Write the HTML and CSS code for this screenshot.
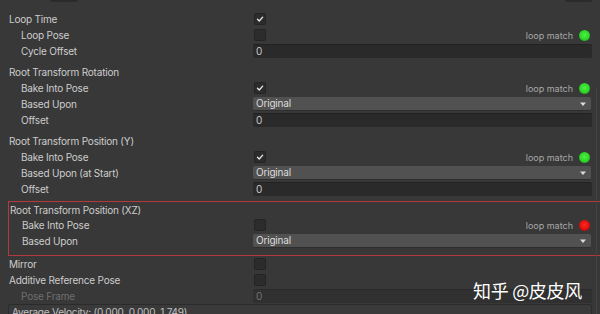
FILE: index.html
```html
<!DOCTYPE html>
<html>
<head>
<meta charset="utf-8">
<link rel="stylesheet" href="styles.css">
</head>
<body>
<div class="top"><span class="nub nub-l"></span><span class="nub nub-r"></span></div>
<div class="panel">
  <div class="row"><span class="label">Loop Time</span><span class="field"><span class="cb on"><svg viewBox="0 0 12 12"><path d="M3 6.3 L5.1 8.4 L9.2 3.8" fill="none" stroke="#e8e8e8" stroke-width="1.6" stroke-linecap="round" stroke-linejoin="round"/></svg></span></span></div>
  <div class="row"><span class="label ind">Loop Pose</span><span class="field"><span class="cb"></span><span class="match">loop match</span><span class="dot green"></span></span></div>
  <div class="row"><span class="label ind">Cycle Offset</span><span class="field"><span class="input">0</span></span></div>

  <div class="section">
    <div class="row"><span class="label">Root Transform Rotation</span><span class="field"></span></div>
    <div class="row"><span class="label ind">Bake Into Pose</span><span class="field"><span class="cb on"><svg viewBox="0 0 12 12"><path d="M3 6.3 L5.1 8.4 L9.2 3.8" fill="none" stroke="#e8e8e8" stroke-width="1.6" stroke-linecap="round" stroke-linejoin="round"/></svg></span><span class="match">loop match</span><span class="dot green"></span></span></div>
    <div class="row"><span class="label ind">Based Upon</span><span class="field"><span class="drop">Original<svg class="arrow" viewBox="0 0 8 6"><path d="M1 1.5 H7 L4 5 Z" fill="#dcdcdc"/></svg></span></span></div>
    <div class="row"><span class="label ind">Offset</span><span class="field"><span class="input">0</span></span></div>
  </div>

  <div class="section">
    <div class="row"><span class="label">Root Transform Position (Y)</span><span class="field"></span></div>
    <div class="row"><span class="label ind">Bake Into Pose</span><span class="field"><span class="cb on"><svg viewBox="0 0 12 12"><path d="M3 6.3 L5.1 8.4 L9.2 3.8" fill="none" stroke="#e8e8e8" stroke-width="1.6" stroke-linecap="round" stroke-linejoin="round"/></svg></span><span class="match">loop match</span><span class="dot green"></span></span></div>
    <div class="row"><span class="label ind">Based Upon (at Start)</span><span class="field"><span class="drop">Original<svg class="arrow" viewBox="0 0 8 6"><path d="M1 1.5 H7 L4 5 Z" fill="#dcdcdc"/></svg></span></span></div>
    <div class="row"><span class="label ind">Offset</span><span class="field"><span class="input">0</span></span></div>
  </div>

  <div class="redbox">
    <div class="row head"><span class="label">Root Transform Position (XZ)</span><span class="field"></span></div>
    <div class="row"><span class="label ind">Bake Into Pose</span><span class="field"><span class="cb"></span><span class="match">loop match</span><span class="dot red"></span></span></div>
    <div class="row"><span class="label ind">Based Upon</span><span class="field"><span class="drop">Original<svg class="arrow" viewBox="0 0 8 6"><path d="M1 1.5 H7 L4 5 Z" fill="#dcdcdc"/></svg></span></span></div>
  </div>

  <div class="row"><span class="label">Mirror</span><span class="field"><span class="cb"></span></span></div>
  <div class="row"><span class="label">Additive Reference Pose</span><span class="field"><span class="cb"></span></span></div>
  <div class="row dim"><span class="label ind">Pose Frame</span><span class="field"><span class="input">0</span></span></div>
  <div class="velocity">Average Velocity: (0.000, 0.000, 1.749)</div>
</div>
<div class="scrollbar"></div>
<div class="watermark">知乎 @皮皮风</div>
</body>
</html>
```

FILE: styles.css
```css
html, body {
  margin: 0;
  padding: 0;
}
body {
  width: 600px;
  height: 314px;
  overflow: hidden;
  background: #383838;
  font-family: Inter, "Noto Sans", sans-serif;
  font-size: 10px;
  letter-spacing: -0.2px;
  color: #cdcdcd;
  position: relative;
}
.top {
  height: 3px;
  display: flex;
  position: relative;
}
.nub {
  display: block;
  height: 2px;
  background: #2b2b2b;
  border-radius: 0 0 3px 3px;
}
.nub-l {
  margin-left: 50px;
  width: 28px;
}
.nub-r {
  margin-left: auto;
  margin-right: 8px;
  width: 27px;
}
.panel {
  padding: 8px 8px 0 9px;
}
.row {
  display: grid;
  grid-template-columns: 244px 1fr;
  height: 16px;
  align-items: center;
}
.label {
  white-space: nowrap;
  line-height: 16px;
}
.label.ind {
  padding-left: 12px;
}
.field {
  display: flex;
  align-items: center;
  height: 16px;
}
.cb {
  width: 12px;
  height: 12px;
  margin-left: 1px;
  box-sizing: border-box;
  background: #2c2c2c;
  border: 1px solid #242424;
  border-radius: 2px;
  display: flex;
}
.cb svg {
  width: 10px;
  height: 10px;
}
.match {
  margin-left: auto;
  font-size: 9px;
  letter-spacing: 0;
  color: #a9a9a9;
  margin-right: 6px;
}
.dot {
  width: 11px;
  height: 11px;
  border-radius: 50%;
  margin-right: 2px;
  box-sizing: border-box;
}
.dot.green {
  background: radial-gradient(circle at 50% 45%, #4cf040 0%, #2fd62a 55%, #1c8a1a 85%, #1a3a1a 100%);
}
.dot.red {
  background: radial-gradient(circle at 50% 45%, #ff2a1a 0%, #e01010 55%, #8a1010 85%, #3a1a1a 100%);
}
.input {
  flex: 1;
  height: 14px;
  box-sizing: border-box;
  background: #2a2a2a;
  border-top: 1px solid #212121;
  border-radius: 2px;
  padding-left: 3px;
  line-height: 13px;
  color: #c8c8c8;
}
.drop {
  flex: 1;
  height: 14px;
  margin-right: 1px;
  box-sizing: border-box;
  background: #515151;
  border-bottom: 1px solid #2e2e2e;
  border-radius: 2px;
  padding-left: 3px;
  line-height: 13px;
  color: #dcdcdc;
  display: flex;
  align-items: center;
}
.arrow {
  width: 8px;
  height: 6px;
  margin-left: auto;
  margin-right: 4px;
}
.section {
  margin-top: 5px;
}
.redbox {
  margin: 4px -10px 0 -1px;
  border: 1px solid #b23a3c;
  padding: 0 9px 6px 0;
}
.redbox .row.head {
  height: 15px;
}
.redbox .label {
  padding-left: 1px;
}
.redbox .label.ind {
  padding-left: 13px;
}
.dim .label {
  color: #6f6f6f;
}
.dim .input {
  background: #303030;
  color: #707070;
  border-top-color: #2a2a2a;
}
.velocity {
  margin-top: 0;
  margin-left: -1px;
  height: 16px;
  box-sizing: border-box;
  border: 1px solid #2b2b2b;
  border-radius: 2px;
  background: #3a3a3a;
  padding-left: 3px;
  line-height: 14px;
  color: #c0c0c0;
  font-size: 10px;
}
.scrollbar {
  position: absolute;
  right: 3px;
  top: 88px;
  bottom: 0;
  width: 1px;
  background: #444;
}
.watermark {
  position: absolute;
  left: 473px;
  top: 277px;
  font-family: "Noto Sans CJK SC", sans-serif;
  font-size: 18px;
  letter-spacing: -0.3px;
  color: #ffffff;
  white-space: nowrap;
}
```
